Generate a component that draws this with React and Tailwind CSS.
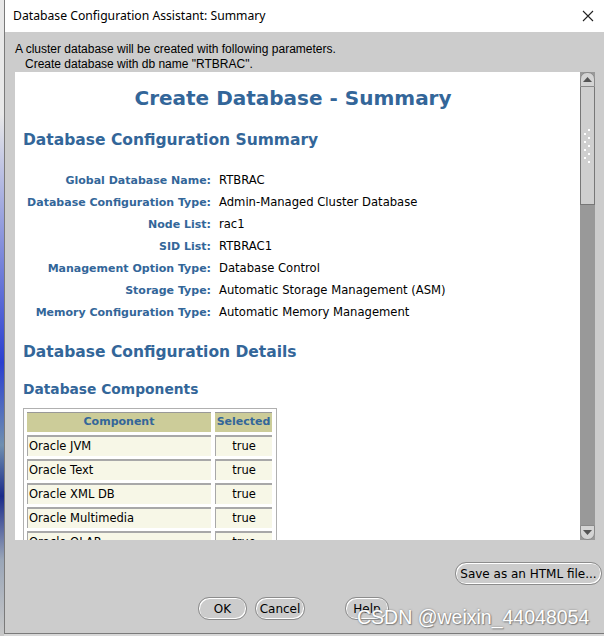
import React from 'react';

const summaryRows = [
    ['Global Database Name:', 'RTBRAC'],
    ['Database Configuration Type:', 'Admin-Managed Cluster Database'],
    ['Node List:', 'rac1'],
    ['SID List:', 'RTBRAC1'],
    ['Management Option Type:', 'Database Control'],
    ['Storage Type:', 'Automatic Storage Management (ASM)'],
    ['Memory Configuration Type:', 'Automatic Memory Management'],
];

const components = ['Oracle JVM', 'Oracle Text', 'Oracle XML DB', 'Oracle Multimedia', 'Oracle OLAP'];

const javaFont = { fontFamily: '"DejaVu Sans", "Liberation Sans", sans-serif' };

const OracleButton = ({ children, className = '' }) => (
    <button
        className={`h-[23px] rounded-[11px] border border-[#8c8c8c] bg-[#cccccc] text-[12px] text-black shadow-[inset_1px_1px_0_#ffffff,inset_-1px_-1px_0_#ffffff] leading-none whitespace-nowrap ${className}`}
        style={javaFont}
    >
        {children}
    </button>
);

const Scrollbar = () => (
    <div className="w-[15px] flex flex-col bg-[#999999]">
        {/* up arrow */}
        <div className="h-[15px] rounded-t-[7px] border border-[#8a8a8a] bg-[#d4d4d4] flex items-center justify-center">
            <svg width="9" height="5" viewBox="0 0 9 5"><polygon points="4.5,0 9,5 0,5" fill="#555" /></svg>
        </div>
        {/* thumb */}
        <div className="h-[118px] border-x border-b border-[#777] bg-[#cfcfcf] flex items-center justify-center">
            <svg width="9" height="34" viewBox="0 0 9 34">
                {[0, 8, 16, 24].map((y) => (
                    <g key={y}>
                        <rect x="5" y={y} width="2" height="2" fill="#fff" />
                        <rect x="1" y={y + 4} width="2" height="2" fill="#fff" />
                    </g>
                ))}
                <rect x="5" y="32" width="2" height="2" fill="#fff" />
            </svg>
        </div>
        <div className="flex-1" />
        {/* down arrow */}
        <div className="h-[15px] rounded-b-[7px] border border-[#8a8a8a] bg-[#d4d4d4] flex items-center justify-center">
            <svg width="9" height="5" viewBox="0 0 9 5"><polygon points="0,0 9,0 4.5,5" fill="#555" /></svg>
        </div>
    </div>
);

const ComponentsTable = () => (
    <div className="w-[254px] border border-[#b0b0b0] p-[3px] flex flex-col gap-[3px]" style={javaFont}>
        <div className="flex gap-[4px]">
            <div className="w-[184px] h-[20px] bg-[#cccc99] border-t border-[#999] flex items-center justify-center text-[11px] font-bold text-[#336699]">
                Component
            </div>
            <div className="w-[57px] h-[20px] bg-[#cccc99] border-t border-[#999] flex items-center justify-center text-[11px] font-bold text-[#336699]">
                Selected
            </div>
        </div>
        {components.map((name) => (
            <div key={name} className="flex gap-[4px]">
                <div className="w-[184px] h-[21px] bg-[#f7f7e7] border-t-2 border-l border-[#a8a8a8] flex items-center pl-[1px] text-[11.5px] text-black whitespace-nowrap">
                    {name}
                </div>
                <div className="w-[57px] h-[21px] bg-[#f7f7e7] border-t-2 border-l border-[#a8a8a8] flex items-center justify-center text-[11.5px] text-black">
                    true
                </div>
            </div>
        ))}
    </div>
);

export default function App() {
    return (
        <div className="w-[604px] h-[636px] relative overflow-hidden flex bg-[#d8d8d8]">
            {/* sliver of desktop on the left */}
            <div className="w-[4px] h-full bg-[linear-gradient(180deg,#e8e8e8_0%,#e8e8e8_18%,#2a3fd0_57%,#6f8fb0_70%,#1a2a8a_78%,#9aa6b8_88%,#c8c8c8_100%)]" />

            <div className="flex-1 h-[634px] flex flex-col border-l border-b border-[#7a7a7a] bg-[#cccccc]">
                {/* title bar */}
                <div className="h-[32px] bg-white flex items-center justify-between pl-[8px] pr-[10px]">
                    <span className="text-[12.2px] text-black" style={{ fontFamily: '"Noto Sans", "Open Sans", sans-serif' }}>
                        Database Configuration Assistant: Summary
                    </span>
                    <svg width="12" height="12" viewBox="0 0 12 12" className="mt-[-1px]">
                        <path d="M1 1 L11 11 M11 1 L1 11" stroke="#222" strokeWidth="1.1" />
                    </svg>
                </div>

                {/* intro text */}
                <div className="pt-[10px] pl-[10px] text-[12px] leading-[15px] text-black" style={{ fontFamily: '"Liberation Sans", Arial, sans-serif' }}>
                    <div>A cluster database will be created with following parameters.</div>
                    <div className="pl-[10px]">Create database with db name "RTBRAC".</div>
                </div>

                {/* report panel */}
                <div className="flex pl-[10px] h-[468px]">
                    <div className="w-[565px] bg-white overflow-hidden pl-[8px]" style={javaFont}>
                        <h1 className="pt-[12px] pr-[17px] text-center text-[20px] leading-[28px] text-[#336699] font-bold">
                            Create Database - Summary
                        </h1>
                        <h2 className="mt-[17px] text-[15.5px] leading-[22px] text-[#336699] font-bold whitespace-nowrap">
                            Database Configuration Summary
                        </h2>
                        <div className="mt-[19px] grid grid-cols-[188px_1fr] gap-x-[8px]">
                            {summaryRows.map(([label, value]) => (
                                <React.Fragment key={label}>
                                    <div className="h-[22px] flex items-center justify-end text-[11px] font-bold text-[#336699] whitespace-nowrap">{label}</div>
                                    <div className="h-[22px] flex items-center text-[11.6px] text-black whitespace-nowrap">{value}</div>
                                </React.Fragment>
                            ))}
                        </div>
                        <h2 className="mt-[17px] text-[15.5px] leading-[22px] text-[#336699] font-bold whitespace-nowrap">
                            Database Configuration Details
                        </h2>
                        <h3 className="mt-[16px] text-[13.8px] leading-[20px] text-[#336699] font-bold whitespace-nowrap">
                            Database Components
                        </h3>
                        <div className="mt-[9px]">
                            <ComponentsTable />
                        </div>
                    </div>
                    <Scrollbar />
                </div>

                {/* buttons */}
                <div className="flex justify-end pt-[22px] pr-[2px]">
                    <OracleButton className="w-[147px]">Save as an HTML file...</OracleButton>
                </div>
                <div className="flex pt-[12px] pl-[193px]">
                    <OracleButton className="w-[49px]">OK</OracleButton>
                    <OracleButton className="w-[50px] ml-[8px]">Cancel</OracleButton>
                    <OracleButton className="w-[44px] ml-[40px]">Help</OracleButton>
                </div>
            </div>

            {/* watermark */}
            <div
                className="absolute left-[357px] top-[603px] text-[19.5px] text-white [text-shadow:0_0_2px_#777,1px_1px_1px_#888]"
                style={{ fontFamily: '"Liberation Sans", Arial, sans-serif' }}
            >
                CSDN @weixin_44048054
            </div>
        </div>
    );
}
